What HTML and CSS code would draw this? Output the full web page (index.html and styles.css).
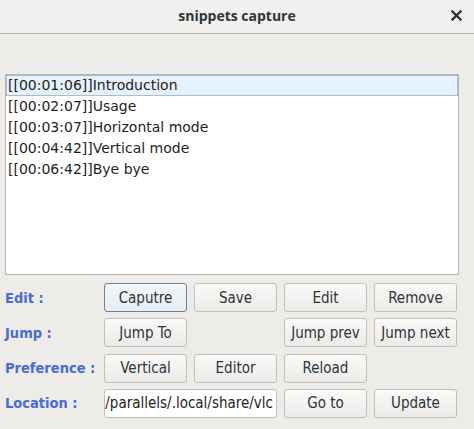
FILE: index.html
```html
<!DOCTYPE html>
<html>
<head>
<meta charset="utf-8">
<link rel="stylesheet" href="styles.css">
</head>
<body>
<div class="window">
  <div class="titlebar">
    <span class="title">snippets capture</span>
    <span class="close"><svg width="11" height="11" viewBox="0 0 11 11"><path d="M1.5 1.5 L9.5 9.5 M9.5 1.5 L1.5 9.5" stroke="#2e3436" stroke-width="2.4" stroke-linecap="square"/></svg></span>
  </div>
  <div class="content">
    <div class="list">
      <div class="item selected">[[00:01:06]]Introduction</div>
      <div class="item">[[00:02:07]]Usage</div>
      <div class="item">[[00:03:07]]Horizontal mode</div>
      <div class="item">[[00:04:42]]Vertical mode</div>
      <div class="item">[[00:06:42]]Bye bye</div>
    </div>
    <div class="controls">
      <div class="label">Edit :</div>
      <button class="btn focused">Caputre</button>
      <button class="btn">Save</button>
      <button class="btn">Edit</button>
      <button class="btn">Remove</button>

      <div class="label">Jump :</div>
      <button class="btn">Jump To</button>
      <div></div>
      <button class="btn">Jump prev</button>
      <button class="btn">Jump next</button>

      <div class="label">Preference :</div>
      <button class="btn">Vertical</button>
      <button class="btn">Editor</button>
      <button class="btn">Reload</button>
      <div></div>

      <div class="label">Location :</div>
      <div class="entry"><span>/parallels/.local/share/vlc</span></div>
      <button class="btn">Go to</button>
      <button class="btn">Update</button>
    </div>
  </div>
</div>
</body>
</html>
```

FILE: styles.css
```css
* { box-sizing: border-box; }
html, body { margin: 0; padding: 0; }
body {
  width: 474px;
  height: 429px;
  overflow: hidden;
  background: #eeece9;
  font-family: "DejaVu Sans", sans-serif;
  font-size: 14px;
  color: #2e3436;
}
.window { width: 474px; height: 429px; display: flex; flex-direction: column; }
.titlebar {
  height: 34px;
  flex: none;
  background: #f1f0ee;
  border-bottom: 1px solid #b3b0ab;
  display: flex;
  align-items: center;
  justify-content: center;
  position: relative;
}
.title {
  font-family: "Open Sans", "DejaVu Sans", sans-serif;
  font-weight: 700;
  font-size: 14px;
  color: #2e3436;
  margin-top: -2px;
}
.close {
  position: absolute;
  right: 12px;
  top: 10px;
  width: 11px;
  height: 11px;
  display: flex;
}
.content { padding: 40px 16px 0 5px; }
.list {
  width: 454px;
  height: 201px;
  background: #ffffff;
  border: 1px solid #b7b3ae;
  padding: 0;
}
.item {
  height: 21px;
  line-height: 20px;
  padding-left: 2px;
  white-space: nowrap;
  color: #1e1e1e;
}
.item.selected {
  background: #e5f1fc;
  border: 1px solid #a9bdd0;
  padding-left: 1px;
  line-height: 19px;
}
.controls {
  margin-top: 8px;
  display: grid;
  grid-template-columns: 92px repeat(4, 83px);
  grid-auto-rows: 29px;
  column-gap: 7px;
  row-gap: 6.33px;
  font-family: "DejaVu Sans Condensed", "DejaVu Sans", sans-serif;
  font-stretch: condensed;
}
.label {
  color: #4a6ad6;
  font-weight: bold;
  font-size: 14.5px;
  display: flex;
  align-items: center;
  white-space: nowrap;
}
.btn {
  font-family: inherit;
  font-stretch: condensed;
  font-size: 15px;
  color: #2e3436;
  border: 1px solid #c3bfba;
  border-radius: 3px;
  background: linear-gradient(#f9f9f8, #ecebe9);
  padding: 0;
  margin: 0;
  height: 29px;
  white-space: nowrap;
}
.btn.focused {
  border-color: #6b8596;
  background: linear-gradient(#f3f6f8, #e6edf2);
}
.entry {
  grid-column: span 2;
  width: 173px;
  background: #ffffff;
  border: 1px solid #c3bfba;
  border-radius: 3px;
  overflow: hidden;
  display: flex;
  align-items: center;
  justify-content: flex-end;
  padding-right: 3px;
  white-space: nowrap;
  font-size: 15px;
  color: #1e1e1e;
}
```
